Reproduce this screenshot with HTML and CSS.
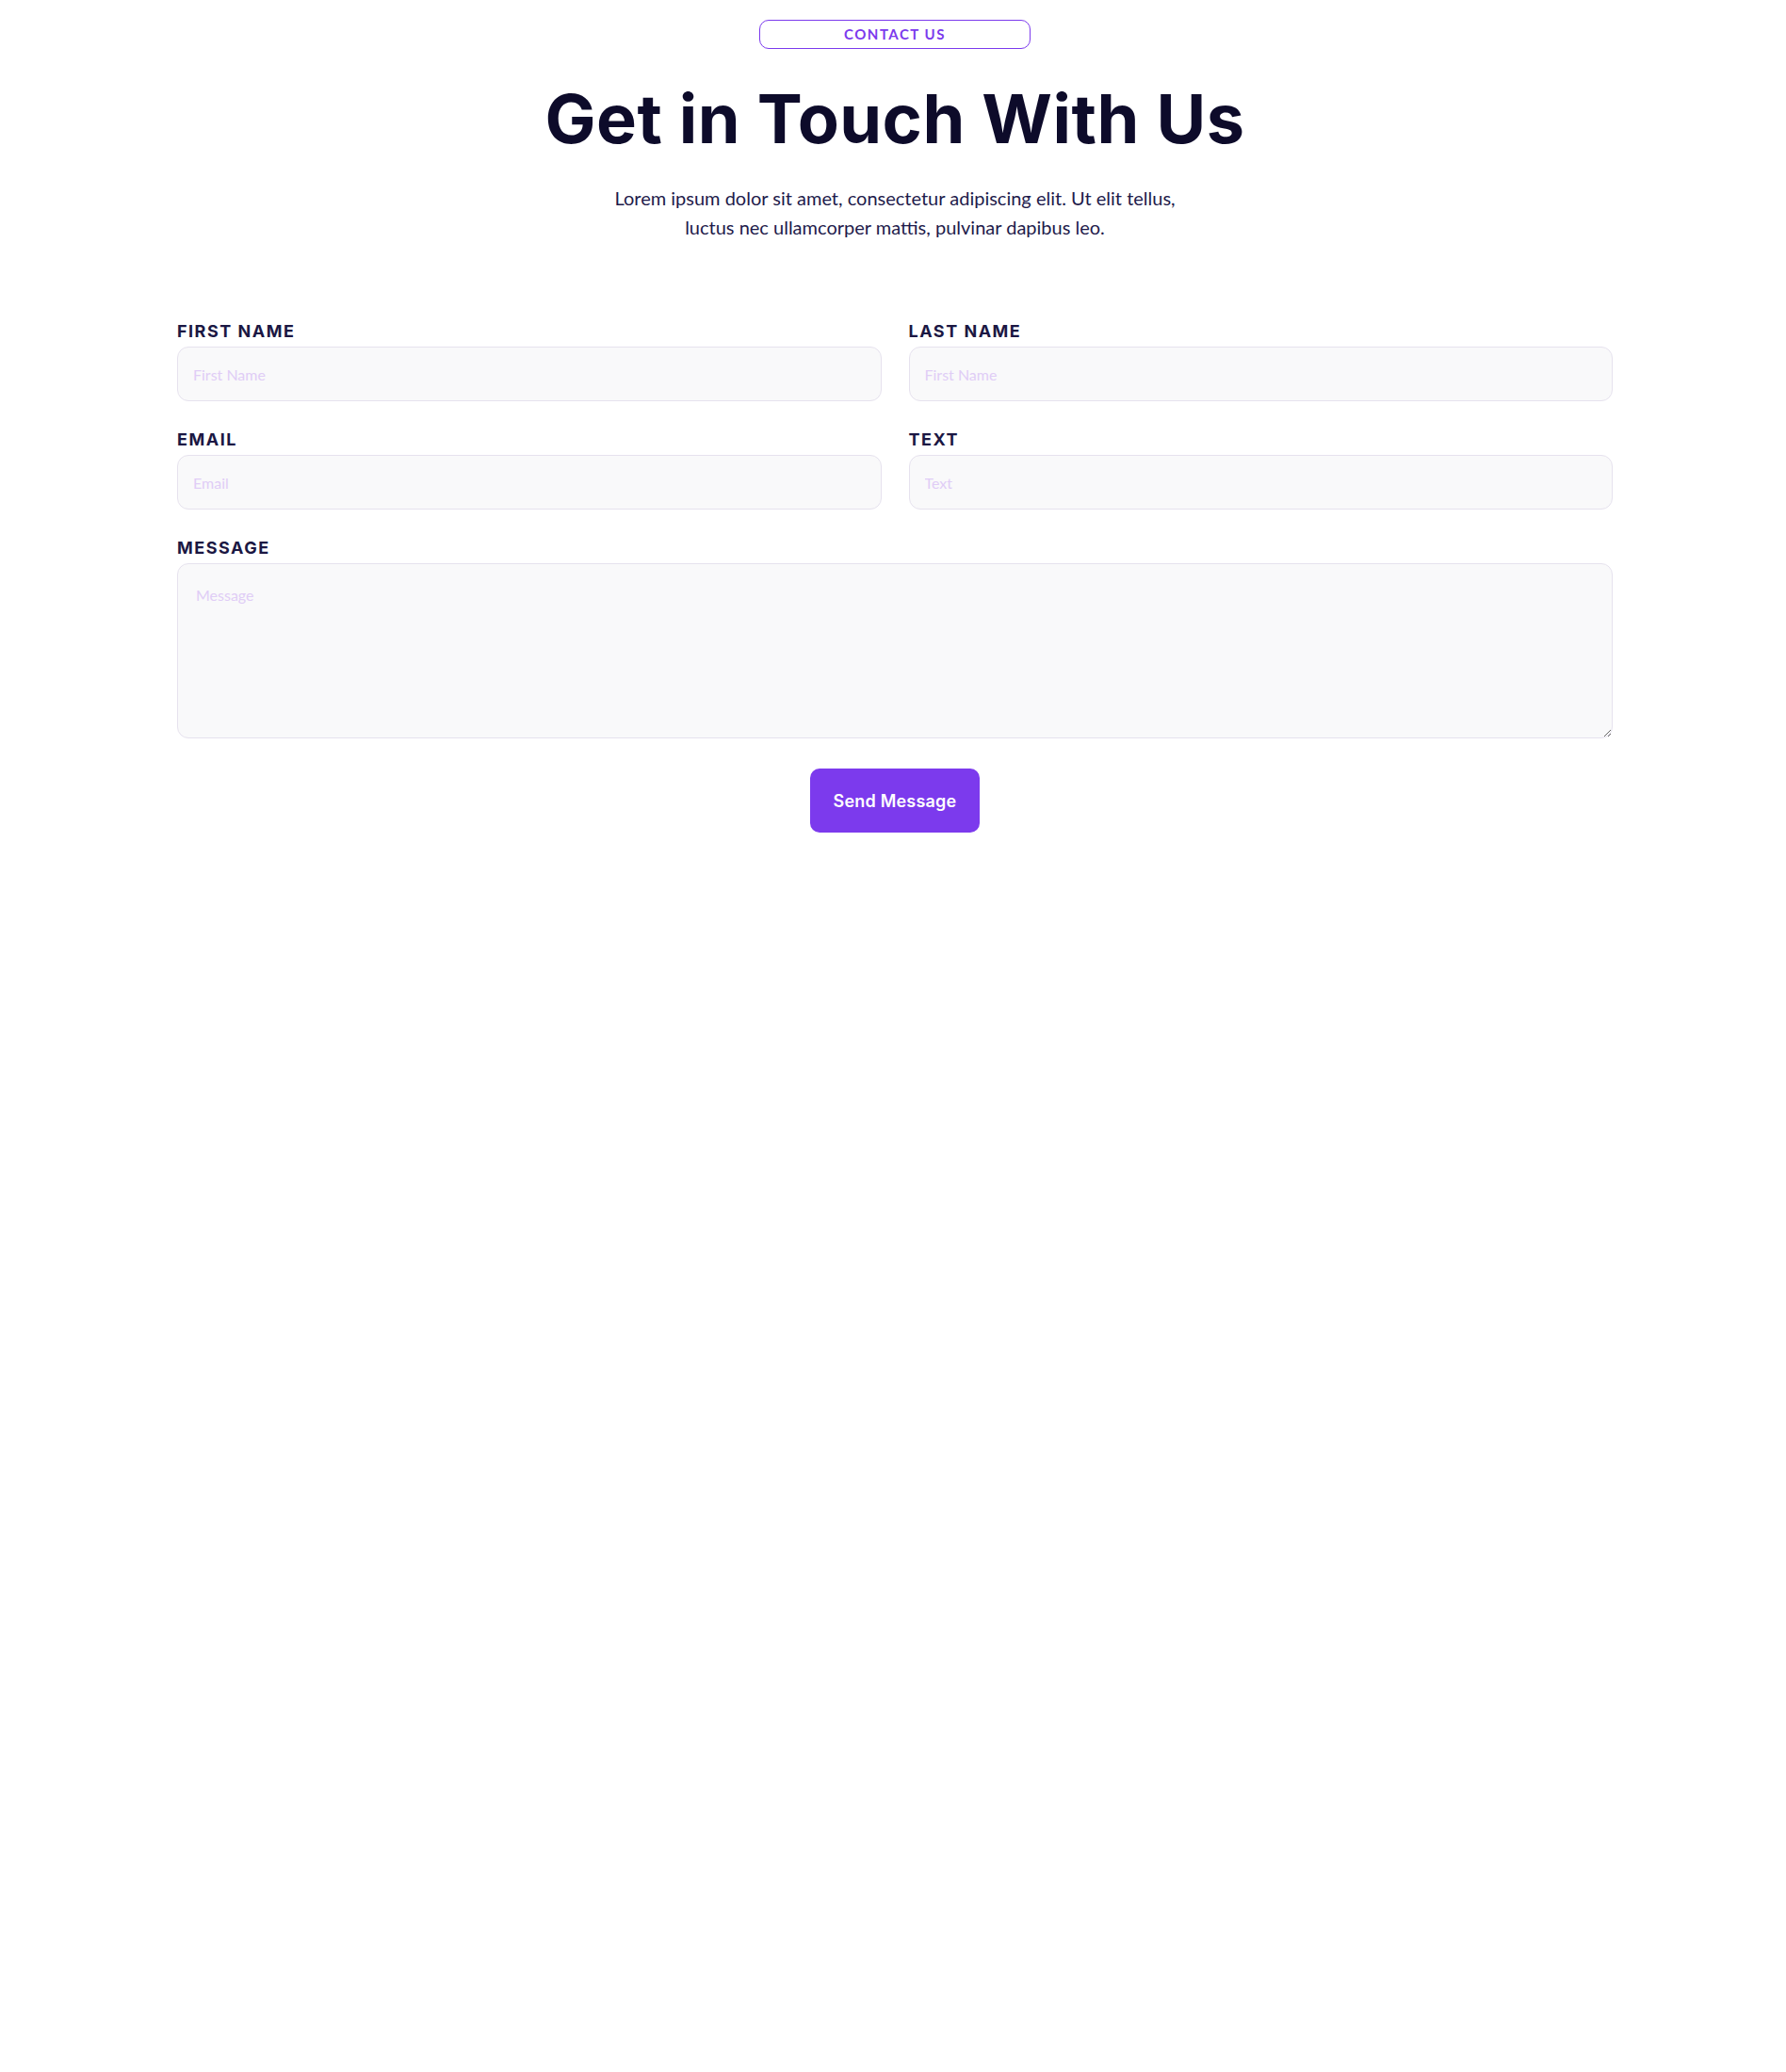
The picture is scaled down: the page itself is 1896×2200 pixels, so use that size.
FILE: index.html
```html
<!DOCTYPE html>
<html lang="en">

<head>
    <meta charset="UTF-8">
    <meta name="viewport" content="width=device-width, initial-scale=1.0">
    <title>Contact Us</title>
    <link rel="stylesheet" href="styles.css">
</head>

<body>
    <section class="contact">
        <div class="contact-head">
            <span class="badge">CONTACT US</span>
            <h2>Get in Touch With Us</h2>
            <p>Lorem ipsum dolor sit amet, consectetur adipiscing elit. Ut elit tellus, luctus nec ullamcorper mattis, pulvinar dapibus leo.</p>
        </div>

        <form id="contactForm" class="contact-form">
            <div class="field">
                <label for="first">First Name</label>
                <input type="text" id="first" name="first" placeholder="First Name">
            </div>
            <div class="field">
                <label for="last">Last Name</label>
                <input type="text" id="last" name="last" placeholder="First Name">
            </div>
            <div class="field">
                <label for="email">Email</label>
                <input type="email" id="email" name="email" placeholder="Email">
            </div>
            <div class="field">
                <label for="text">Text</label>
                <input type="text" id="text" name="text" placeholder="Text">
            </div>
            <div class="field full">
                <label for="message">Message</label>
                <textarea id="message" name="message" placeholder="Message"></textarea>
            </div>
            <div class="actions">
                <button type="submit" class="send-btn">Send Message</button>
            </div>
        </form>
    </section>
</body>

</html>
```

FILE: styles.css
```css
body {
    margin: 0;
    background-color: #ffffff;
    font-family: 'Lato', sans-serif;
    color: #1e1b4b;
}

.contact {
    max-width: 1524px;
    margin: 0 auto;
    padding-top: 21px;
    padding-left: 4px;
}

.contact-head {
    display: flex;
    flex-direction: column;
    align-items: center;
    text-align: center;
}

.badge {
    box-sizing: border-box;
    width: 288px;
    height: 31px;
    line-height: 29px;
    border: 1px solid #7c3aed;
    border-radius: 10px;
    color: #7c3aed;
    font-family: 'Lato', sans-serif;
    font-weight: 700;
    font-size: 15px;
    letter-spacing: 1.5px;
}

h2 {
    margin: 32px 0 0;
    font-family: 'Inter', sans-serif;
    font-weight: 700;
    font-size: 72px;
    line-height: 84px;
    color: #0d0b2a;
    letter-spacing: 0.5px;
}

.contact-head p {
    max-width: 600px;
    margin: 27px 0 0;
    font-size: 20px;
    line-height: 31px;
    color: #1e1b4b;
}

.contact-form {
    display: grid;
    grid-template-columns: 1fr 1fr;
    column-gap: 29px;
    row-gap: 30px;
    margin-top: 84px;
}

.field {
    display: flex;
    flex-direction: column;
}

.field.full {
    grid-column: 1 / -1;
}

label {
    font-family: 'Inter', sans-serif;
    font-weight: 700;
    font-size: 18px;
    line-height: 22px;
    letter-spacing: 1.5px;
    text-transform: uppercase;
    color: #1b1743;
    margin-bottom: 5px;
}

input, textarea {
    box-sizing: border-box;
    width: 100%;
    height: 58px;
    padding: 0 16px;
    border: 1px solid #e6e2ee;
    border-radius: 12px;
    background-color: #f9f9fa;
    font-family: 'Lato', sans-serif;
    font-size: 16px;
    color: #1e1b4b;
    outline: none;
}

textarea {
    height: 186px;
    padding: 23px 19px;
    resize: vertical;
}

input::placeholder, textarea::placeholder {
    color: #e0cdf6;
}

.actions {
    grid-column: 1 / -1;
    display: flex;
    justify-content: center;
    margin-top: 2px;
}

.send-btn {
    width: 180px;
    height: 68px;
    border: none;
    border-radius: 10px;
    background-color: #7c3aed;
    color: #ffffff;
    font-family: 'Inter', sans-serif;
    font-weight: 600;
    font-size: 18px;
    letter-spacing: 0.2px;
    cursor: pointer;
}
```
